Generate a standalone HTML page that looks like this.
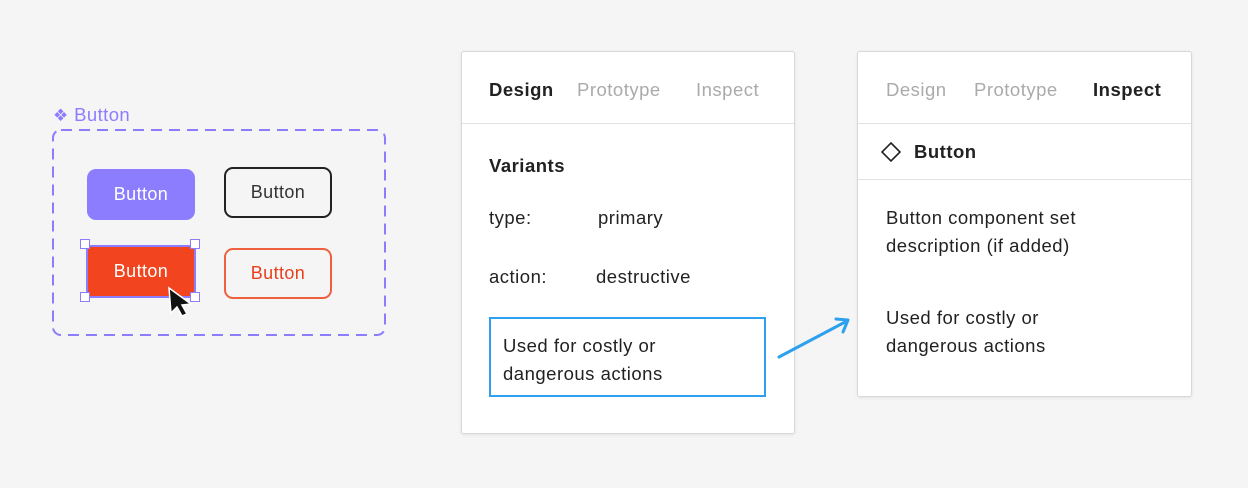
<!DOCTYPE html><html><head><style>
body{margin:0;width:1248px;height:488px;background:#f5f5f5;font-family:"Liberation Sans",sans-serif;position:relative;overflow:hidden}
.a{position:absolute}
.btn{position:absolute;box-sizing:border-box;display:flex;align-items:center;justify-content:center;font-size:18px;letter-spacing:.4px}
.panel{position:absolute;background:#fff;border:1px solid #d8d8d8;border-radius:3px;box-shadow:0 1px 3px rgba(0,0,0,.08)}
.t{position:absolute;font-size:18.5px;color:#222;white-space:nowrap;letter-spacing:.5px}
.g{color:#aaa}
.h{height:1px;background:#e2e2e2;position:absolute;left:0;right:0}
.hd{width:10px;height:10px;background:#fff;border:1.5px solid #8c7dff;position:absolute;box-sizing:border-box}
</style></head><body>
<div class="a" style="left:53px;top:104px;font-size:18.5px;color:#8c7dff;letter-spacing:.4px"><span style="font-size:17px">❖</span> Button</div>
<svg class="a" style="left:52px;top:129px" width="335" height="208"><rect x="1" y="1" width="332" height="205" rx="8" fill="none" stroke="#8c7dff" stroke-width="2" stroke-dasharray="11 7"/></svg>
<div class="btn" style="left:87px;top:169px;width:108px;height:51px;background:#8c7dff;color:#fff;border-radius:9px">Button</div>
<div class="btn" style="left:224px;top:167px;width:108px;height:51px;border:2px solid #222;color:#333;border-radius:9px">Button</div>
<div class="btn" style="left:86px;top:245px;width:110px;height:53px;background:#f2441e;color:#fff;border:2px solid #8c7dff">Button</div>
<div class="btn" style="left:224px;top:248px;width:108px;height:51px;border:2px solid #f0603f;color:#e8401c;border-radius:9px">Button</div>
<div class="hd" style="left:80px;top:239px"></div><div class="hd" style="left:190px;top:239px"></div>
<div class="hd" style="left:80px;top:292px"></div><div class="hd" style="left:190px;top:292px"></div>
<svg class="a" style="left:166px;top:286px" width="30" height="34"><path d="M3 2 L5 27 L11 21 L16 30 L21 28 L16 19 L25 18 Z" fill="#111" stroke="#fff" stroke-width="1.5"/></svg>

<div class="panel" style="left:461px;top:51px;width:332px;height:381px">
<div class="t" style="left:27px;top:27px;font-weight:bold">Design</div>
<div class="t g" style="left:115px;top:27px">Prototype</div>
<div class="t g" style="left:234px;top:27px">Inspect</div>
<div class="h" style="top:71px"></div>
<div class="t" style="left:27px;top:103px;font-weight:bold">Variants</div>
<div class="t" style="left:27px;top:155px">type:</div>
<div class="t" style="left:136px;top:155px">primary</div>
<div class="t" style="left:27px;top:214px">action:</div>
<div class="t" style="left:134px;top:214px">destructive</div>
<div class="a" style="left:27px;top:265px;width:277px;height:80px;box-sizing:border-box;border:2px solid #2ea1ee"></div>
<div class="t" style="left:41px;top:280px;line-height:28px">Used for costly or<br>dangerous actions</div>
</div>

<svg class="a" style="left:770px;top:310px" width="90" height="55"><path d="M9 47 L77 11 M66 9 L78 10 L73 22" fill="none" stroke="#2ea1ee" stroke-width="3" stroke-linecap="round" stroke-linejoin="round"/></svg>

<div class="panel" style="left:857px;top:51px;width:333px;height:344px">
<div class="t g" style="left:28px;top:27px">Design</div>
<div class="t g" style="left:116px;top:27px">Prototype</div>
<div class="t" style="left:235px;top:27px;font-weight:bold">Inspect</div>
<div class="h" style="top:71px"></div>
<svg class="a" style="left:22px;top:89px" width="22" height="22"><path d="M11 2 L20 11 L11 20 L2 11 Z" fill="none" stroke="#222" stroke-width="1.6"/></svg>
<div class="t" style="left:56px;top:89px;font-weight:bold">Button</div>
<div class="h" style="top:127px"></div>
<div class="t" style="left:28px;top:152px;line-height:28px">Button component set<br>description (if added)</div>
<div class="t" style="left:28px;top:252px;line-height:28px">Used for costly or<br>dangerous actions</div>
</div>
</body></html>
